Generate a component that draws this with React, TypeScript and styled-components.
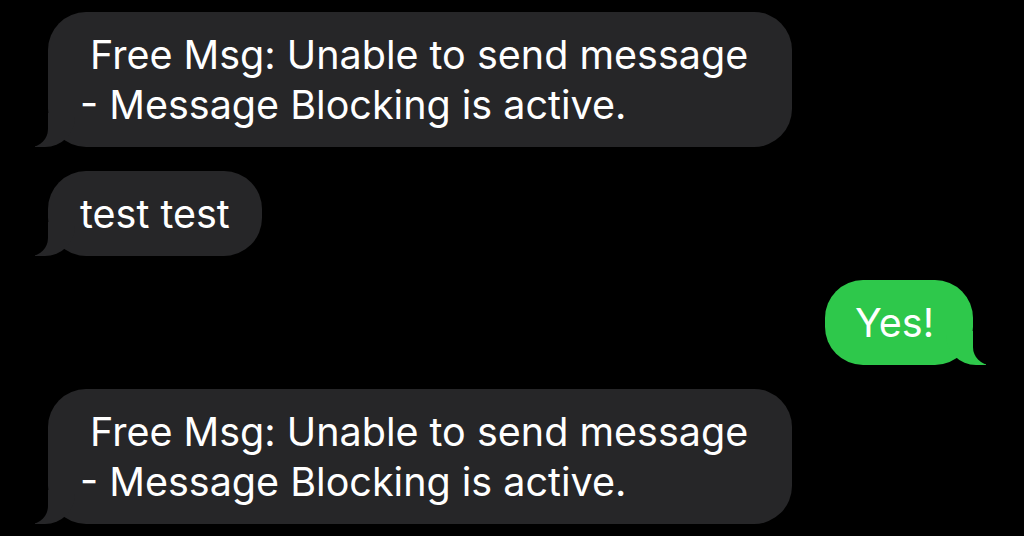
import React from "react";
import styled, { createGlobalStyle, css } from "styled-components";

const Global = createGlobalStyle`
  html, body { margin: 0; padding: 0; background: #000; }
  body { font-family: Inter, "Noto Sans", sans-serif; -webkit-font-smoothing: antialiased; }
`;

const Thread = styled.div`
  width: 1024px;
  height: 536px;
  box-sizing: border-box;
  padding: 12px 51px 0 48px;
  display: flex;
  flex-direction: column;
  gap: 24px;
  background: #000;
  overflow: hidden;
`;

const Bubble = styled.div<{ $out?: boolean; $width?: number }>`
  position: relative;
  box-sizing: border-box;
  align-self: ${(p) => (p.$out ? "flex-end" : "flex-start")};
  ${(p) => p.$width && css`width: ${p.$width}px;`}
  padding: ${(p) => (p.$out ? "18px 39px 17px 30px" : "18px 32px 17px 32px")};
  border-radius: 38px;
  background: ${(p) => (p.$out ? "#2ec84b" : "#262628")};
  color: #fff;
  font-size: 39.5px;
  line-height: 50px;
  white-space: nowrap;

  &::before {
    content: "";
    position: absolute;
    bottom: 0;
    width: 40px;
    height: 34px;
    background: ${(p) => (p.$out ? "#2ec84b" : "#262628")};
    ${(p) =>
      p.$out
        ? css`right: -13px; border-bottom-left-radius: 30px;`
        : css`left: -13px; border-bottom-right-radius: 30px;`}
  }
  &::after {
    content: "";
    position: absolute;
    bottom: 0;
    width: 20px;
    height: 34px;
    background: #000;
    ${(p) =>
      p.$out
        ? css`right: -20px; border-bottom-left-radius: 18px;`
        : css`left: -20px; border-bottom-right-radius: 18px;`}
  }
`;

const Text = styled.span`
  position: relative;
  z-index: 1;
`;

const Line = styled.span<{ $indent?: boolean }>`
  display: block;
  ${(p) => p.$indent && css`padding-left: 10px;`}
`;

const Blocked = () => (
  <Bubble $width={744}>
    <Text>
      <Line $indent>Free Msg: Unable to send message</Line>
      <Line>- Message Blocking is active.</Line>
    </Text>
  </Bubble>
);

export default function App() {
  return (
    <>
      <Global />
      <Thread>
        <Blocked />
        <Bubble>
          <Text>test test</Text>
        </Bubble>
        <Bubble $out>
          <Text>Yes!</Text>
        </Bubble>
        <Blocked />
      </Thread>
    </>
  );
}
